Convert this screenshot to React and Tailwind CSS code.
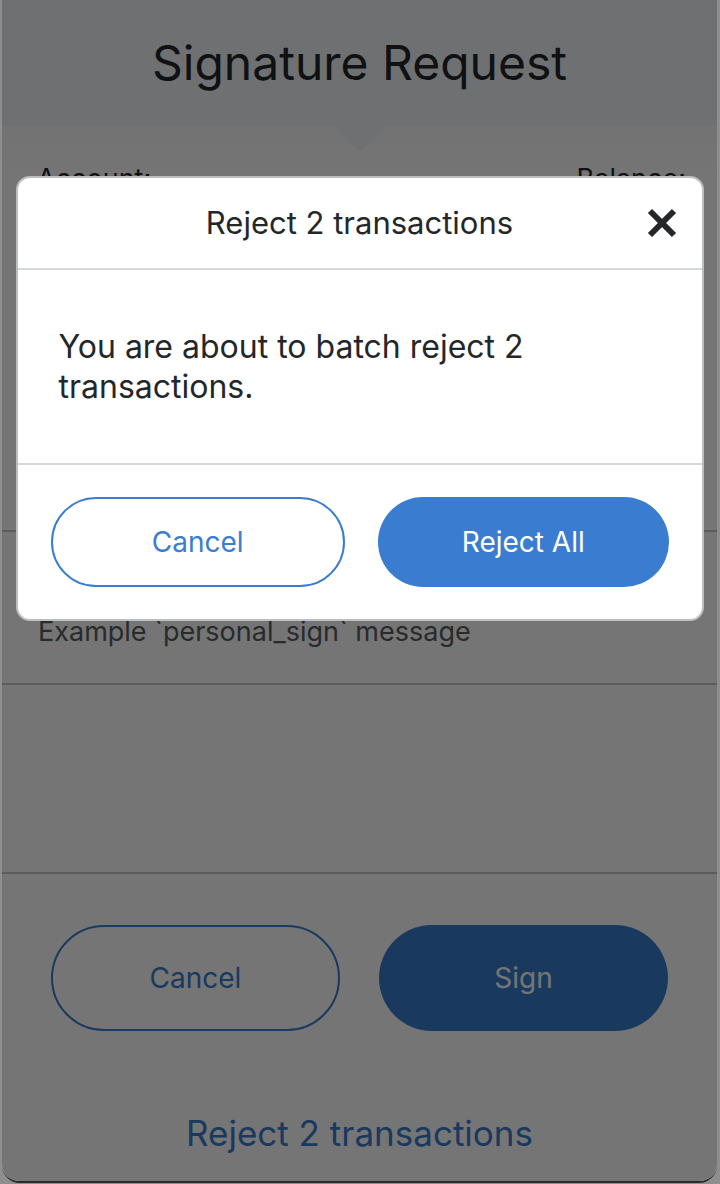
import React from 'react';

const font = { fontFamily: 'Inter, Lato, "Noto Sans", sans-serif' };

const CloseIcon = () => (
  <svg width="32" height="32" viewBox="0 0 32 32" fill="none">
    <path d="M4 4L28 28M28 4L4 28" stroke="#24272a" strokeWidth="6" />
  </svg>
);

const SignatureRequest = () => (
  <div className="relative isolate flex h-full flex-col bg-white">
    <div className="relative z-10 flex h-[126px] shrink-0 items-center justify-center bg-[#f2f4f8]">
      <h1 className="text-[48px] leading-none text-[#24272a]">Signature Request</h1>
      <div className="absolute left-1/2 top-full h-0 w-0 -translate-x-1/2 border-x-[27px] border-t-[26px] border-x-transparent border-t-[#f2f4f8]" />
    </div>

    {/* account info, mostly under the modal */}
    <div className="h-[406px] shrink-0 border-b-2 border-[#c6c8ca] bg-gradient-to-b from-[#fafafa] to-white to-[16%] px-[35px] pt-[33px]">
      <div className="flex justify-between text-[27px] leading-[39px] text-[#24272a]">
        <span>Account:</span>
        <span className="mr-[-4px]">Balance:</span>
      </div>
    </div>

    <div className="h-[153px] shrink-0 border-b-2 border-[#c6c8ca] px-[36px] pt-[43px] text-[27px] leading-[38px]">
      <div className="text-[#24272a]">Message:</div>
      <div className="text-[#5a5d61]">Example `personal_sign` message</div>
    </div>

    <div className="flex-1 border-b-2 border-[#c6c8ca]" />

    <div className="flex shrink-0 flex-col items-center pb-[26px] pt-[51px]">
      <div className="flex gap-[39px]">
        <button className="h-[106px] w-[289px] rounded-full border-2 border-[#3a7dd0] text-[28px] text-[#3a7dd0]">
          Cancel
        </button>
        <button className="h-[106px] w-[289px] rounded-full bg-[#3a7dd0] text-[28px] text-white">
          Sign
        </button>
      </div>
      <button className="mt-[80px] text-[35px] leading-[44px] text-[#3a7dd0]">Reject 2 transactions</button>
    </div>
  </div>
);

const RejectModal = () => (
  <div className="mx-auto mt-[176px] w-[688px] overflow-hidden rounded-[14px] border-2 border-[#bcbec0] bg-white text-[#24272a]">
    <div className="relative flex h-[92px] items-center justify-center border-b-2 border-[#d6d9dc]">
      <h2 className="text-[31px]">Reject 2 transactions</h2>
      <button className="absolute right-[24px] top-1/2 -translate-y-1/2">
        <CloseIcon />
      </button>
    </div>
    <div className="flex h-[195px] items-center border-b-2 border-[#d6d9dc] px-[41px]">
      <p className="text-[32px] leading-[40px]">You are about to batch reject 2 transactions.</p>
    </div>
    <div className="flex gap-[33px] px-[33px] py-[32px]">
      <button className="h-[90px] flex-1 rounded-full border-2 border-[#3a7dd0] text-[28px] text-[#3a7dd0]">
        Cancel
      </button>
      <button className="h-[90px] flex-1 rounded-full bg-[#3a7dd0] text-[28px] text-white">
        Reject All
      </button>
    </div>
  </div>
);

export default function App() {
  return (
    <div className="h-[1184px] w-[720px] overflow-hidden bg-[#8e8e8e]" style={font}>
      <div className="relative ml-[2px] mr-[3px] h-[1183px] overflow-hidden rounded-b-[18px] border-b-2 border-[#2b2b2b]">
        <SignatureRequest />
        <div className="absolute inset-0 bg-black/[0.54]">
          <RejectModal />
        </div>
      </div>
    </div>
  );
}
